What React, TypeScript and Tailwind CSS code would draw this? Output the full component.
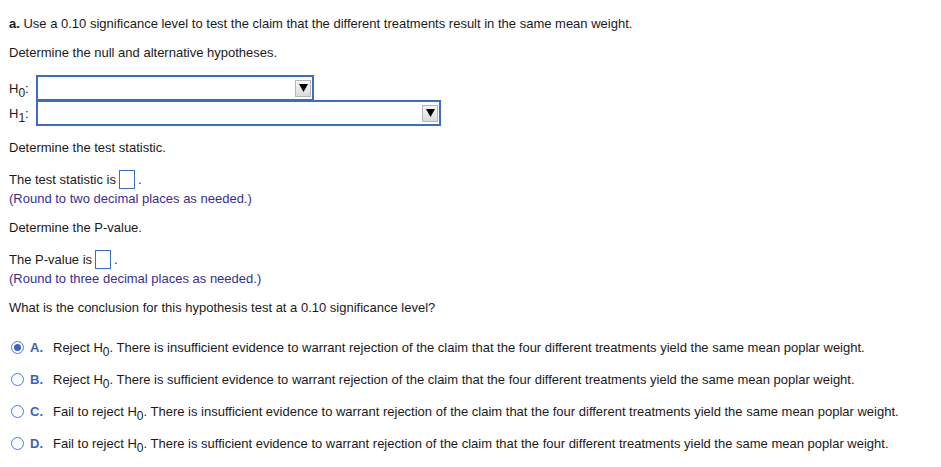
import React from "react";

const Sub = ({ c }: { c: string }) => (
  <span className="relative top-[4px] text-[12px] leading-none">{c}</span>
);

const Arrow = () => (
  <span className="flex h-[17px] w-[16px] items-center justify-center border border-[#b5b5b5] bg-gradient-to-b from-[#f6f6f6] to-[#dcdcdc]">
    <svg width="9" height="8" viewBox="0 0 9 8">
      <path d="M0 0 H9 L4.5 8 Z" fill="#000" />
    </svg>
  </span>
);

const Select = ({ width }: { width: string }) => (
  <div className={`flex h-[26px] items-center justify-end border-2 border-[#3b6cc8] bg-white pr-[1px] ${width}`}>
    <Arrow />
  </div>
);

const Box = () => (
  <span className="mx-[3px] inline-block h-[19px] w-[16px] border border-[#3b6cc8] bg-white align-middle" />
);

const Radio = ({ on }: { on?: boolean }) => (
  <span className="flex h-[13px] w-[13px] items-center justify-center rounded-full border border-[#4f7ad0] bg-white">
    {on && <span className="h-[7px] w-[7px] rounded-full bg-[#3c64c0]" />}
  </span>
);

const options = [
  { l: "A.", pre: "Reject H", text: "There is insufficient evidence to warrant rejection of the claim that the four different treatments yield the same mean poplar weight.", on: true },
  { l: "B.", pre: "Reject H", text: "There is sufficient evidence to warrant rejection of the claim that the four different treatments yield the same mean poplar weight." },
  { l: "C.", pre: "Fail to reject H", text: "There is insufficient evidence to warrant rejection of the claim that the four different treatments yield the same mean poplar weight." },
  { l: "D.", pre: "Fail to reject H", text: "There is sufficient evidence to warrant rejection of the claim that the four different treatments yield the same mean poplar weight." },
];

export default function App() {
  return (
    <div
      className="h-[467px] w-[941px] bg-white pl-[9px] pt-[16px] text-[13px] leading-[15px] text-[#1a1a1a]"
      style={{ fontFamily: '"Liberation Sans", Arial, sans-serif' }}
    >
      <p>
        <b>a.</b> Use a 0.10 significance level to test the claim that the different treatments result in the same mean weight.
      </p>
      <p className="mt-[14px]">Determine the null and alternative hypotheses.</p>

      <div className="mt-[15px] flex flex-col">
        <div className="flex items-center">
          <span className="w-[27px]">
            H<Sub c="0" />:
          </span>
          <Select width="w-[278px]" />
        </div>
        <div className="mt-[-1px] flex items-center">
          <span className="w-[27px]">
            H<Sub c="1" />:
          </span>
          <Select width="w-[405px]" />
        </div>
      </div>

      <p className="mt-[14px]">Determine the test statistic.</p>

      <p className="mt-[15px] flex items-center">
        The test statistic is
        <Box />.
      </p>
      <p className="mt-[2px] text-[#3a2f8c]">(Round to two decimal places as needed.)</p>

      <p className="mt-[14px]">Determine the P-value.</p>

      <p className="mt-[15px] flex items-center">
        The P-value is
        <Box />.
      </p>
      <p className="mt-[2px] text-[#3a2f8c]">(Round to three decimal places as needed.)</p>

      <p className="mt-[14px]">What is the conclusion for this hypothesis test at a 0.10 significance level?</p>

      <div className="mt-[25px] flex flex-col gap-[17px] pl-[2px]">
        {options.map((o) => (
          <div key={o.l} className="flex items-center">
            <Radio on={o.on} />
            <span className="ml-[6px] w-[23px] font-bold text-[#3e5fc0]">{o.l}</span>
            <span>
              {o.pre}
              <Sub c="0" />. {o.text}
            </span>
          </div>
        ))}
      </div>
    </div>
  );
}
